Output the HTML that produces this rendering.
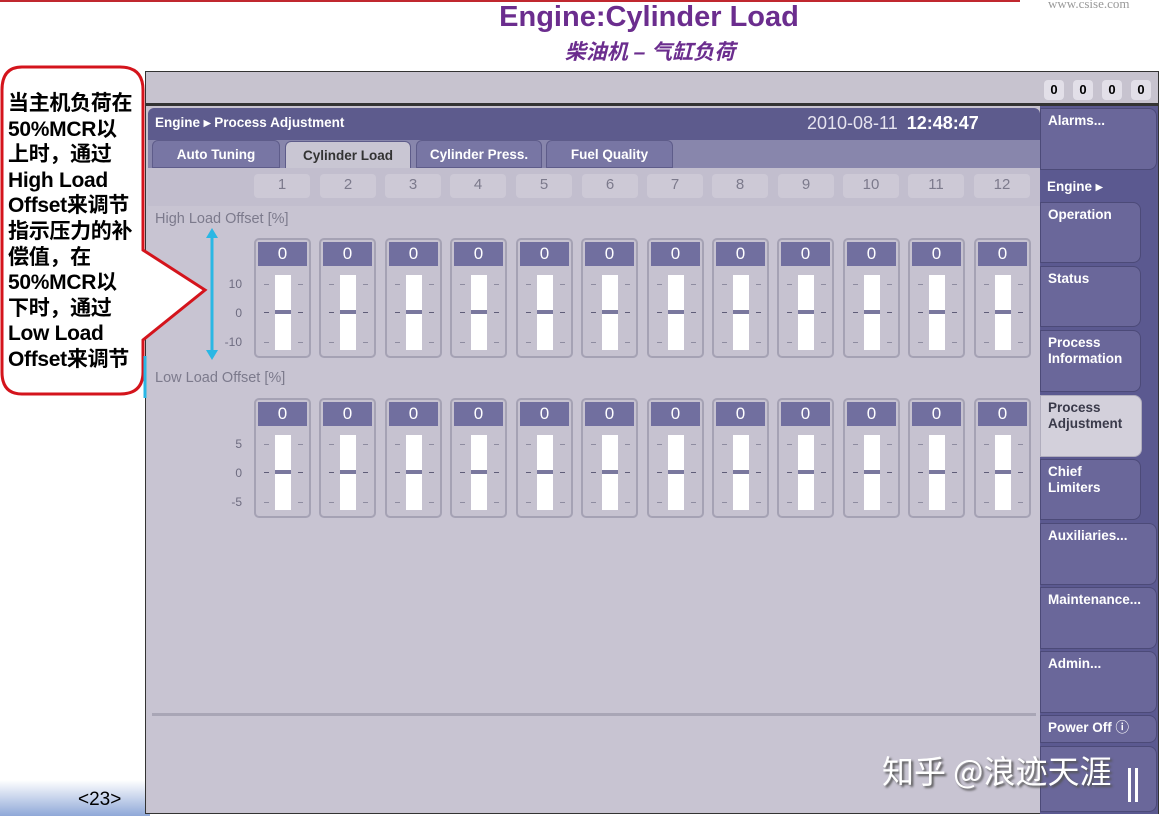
<!DOCTYPE html>
<html><head><meta charset="utf-8"><style>
*{margin:0;padding:0;box-sizing:border-box}
body{width:1166px;height:816px;overflow:hidden;background:#fff;position:relative;font-family:"Liberation Sans","Noto Sans CJK SC",sans-serif}
.a{position:absolute}
.t{font-weight:bold;color:#fff}
.b{position:absolute;width:57px;height:120px;border:2px solid #a5a2b4;border-radius:5px;background-color:#c6c2d0;
background-image:linear-gradient(#8e8ca0,#8e8ca0),linear-gradient(#8e8ca0,#8e8ca0),linear-gradient(#5f5d78,#5f5d78),linear-gradient(#5f5d78,#5f5d78),linear-gradient(#8e8ca0,#8e8ca0),linear-gradient(#8e8ca0,#8e8ca0);
background-size:5px 1px;background-repeat:no-repeat;
background-position:8px 44px,42px 44px,8px 72px,42px 72px,8px 102px,42px 102px}
.b i{position:absolute;left:2px;top:2px;width:49px;height:24px;background:#716f9f;color:#fff;font-style:normal;font-size:17px;text-align:center;line-height:24px}
.b:before{content:"";position:absolute;left:19px;top:35px;width:16px;height:75px;background:#fff}
.b:after{content:"";position:absolute;left:19px;top:70px;width:16px;height:4px;background:#7a789e}
.n{position:absolute;top:174px;width:56px;height:24px;text-align:center;font-size:15px;color:#7c7a8c;background:#cdc9d6;border-radius:4px;line-height:22px}
.sc{position:absolute;font-size:12px;color:#6e6c80;text-align:right;width:30px}
.sb{position:absolute;left:1040px;background:#6a679a;border:1px solid #4c4a78;border-radius:0 8px 8px 0;color:#fff;font-weight:bold;font-size:13.5px;padding:4px 7px;line-height:16px}
.tab{position:absolute;top:140px;height:28px;background:#7876a4;border-radius:6px 6px 0 0;color:#fff;font-weight:bold;font-size:13.5px;text-align:center;line-height:28px;border:1px solid #5e5c8a}
</style></head><body>
<div class="a" style="left:0;top:0;width:1020px;height:2px;background:#c0282f"></div>
<div class="a" style="left:1048px;top:-4px;font-family:'Liberation Serif',serif;font-size:13px;color:#999">www.csise.com</div>
<div class="a" style="left:0;top:0;width:1298px;text-align:center;font-size:29px;font-weight:bold;color:#6b2d8e;line-height:34px">Engine:Cylinder Load</div>
<div class="a" style="left:0;top:36px;width:1300px;text-align:center;font-size:21px;font-weight:bold;font-style:italic;color:#6b2d8e">柴油机 – 气缸负荷</div>
<div class="a" style="left:0;top:780px;width:150px;height:36px;background:linear-gradient(180deg,#fff,#8fa8d8)"></div>
<div class="a" style="left:78px;top:789px;font-size:19px">&lt;23&gt;</div>
<div class="a" style="left:145px;top:71px;width:1014px;height:743px;background:#c7c3cf;border:1px solid #333"></div>
<div class="a" style="left:146px;top:103px;width:1012px;height:3px;background:#333"></div>
<div class="a" style="left:1040px;top:78px;width:118px;height:24px;">
<span class="a" style="left:4px;top:2px;width:20px;height:20px;background:#e2dfe8;border-radius:4px;font-weight:bold;font-size:13px;text-align:center;line-height:20px">0</span>
<span class="a" style="left:33px;top:2px;width:20px;height:20px;background:#e2dfe8;border-radius:4px;font-weight:bold;font-size:13px;text-align:center;line-height:20px">0</span>
<span class="a" style="left:62px;top:2px;width:20px;height:20px;background:#e2dfe8;border-radius:4px;font-weight:bold;font-size:13px;text-align:center;line-height:20px">0</span>
<span class="a" style="left:91px;top:2px;width:20px;height:20px;background:#e2dfe8;border-radius:4px;font-weight:bold;font-size:13px;text-align:center;line-height:20px">0</span></div>
<div class="a" style="left:148px;top:108px;width:892px;height:704px;background:#c8c4d2;border-radius:6px 6px 0 0"></div>
<div class="a" style="left:148px;top:108px;width:892px;height:32px;background:#5d5b8d;border-radius:6px 6px 0 0"></div>
<div class="a t" style="left:155px;top:115px;font-size:13.5px">Engine ▸ Process Adjustment</div>
<div class="a" style="left:807px;top:113px;font-size:18px;color:#e6e4f0">2010-08-11 <b style="color:#fff;margin-left:4px">12:48:47</b></div>
<div class="a" style="left:148px;top:140px;width:892px;height:28px;background:#8886ac"></div>
<div class="tab" style="left:152px;width:128px">Auto Tuning</div>
<div class="tab" style="left:285px;width:126px;background:#c9c6d3;color:#333;top:141px">Cylinder Load</div>
<div class="tab" style="left:416px;width:126px">Cylinder Press.</div>
<div class="tab" style="left:546px;width:127px">Fuel Quality</div>
<div class="a" style="left:148px;top:168px;width:892px;height:38px;background:#c2bece"></div>
<div class="n" style="left:254px">1</div><div class="n" style="left:320px">2</div><div class="n" style="left:385px">3</div><div class="n" style="left:450px">4</div><div class="n" style="left:516px">5</div><div class="n" style="left:582px">6</div><div class="n" style="left:647px">7</div><div class="n" style="left:712px">8</div><div class="n" style="left:778px">9</div><div class="n" style="left:843px">10</div><div class="n" style="left:908px">11</div><div class="n" style="left:974px">12</div>
<div class="a" style="left:155px;top:211px;font-size:14.5px;color:#7c7a8c">High Load Offset [%]</div>
<div class="a" style="left:155px;top:370px;font-size:14.5px;color:#7c7a8c">Low Load Offset [%]</div>
<div class="sc" style="left:212px;top:277px">10</div><div class="sc" style="left:212px;top:306px">0</div><div class="sc" style="left:212px;top:335px">-10</div>
<div class="sc" style="left:212px;top:437px">5</div><div class="sc" style="left:212px;top:466px">0</div><div class="sc" style="left:212px;top:495px">-5</div>
<div class="b" style="left:254px;top:238px"><i>0</i></div><div class="b" style="left:319px;top:238px"><i>0</i></div><div class="b" style="left:385px;top:238px"><i>0</i></div><div class="b" style="left:450px;top:238px"><i>0</i></div><div class="b" style="left:516px;top:238px"><i>0</i></div><div class="b" style="left:581px;top:238px"><i>0</i></div><div class="b" style="left:647px;top:238px"><i>0</i></div><div class="b" style="left:712px;top:238px"><i>0</i></div><div class="b" style="left:777px;top:238px"><i>0</i></div><div class="b" style="left:843px;top:238px"><i>0</i></div><div class="b" style="left:908px;top:238px"><i>0</i></div><div class="b" style="left:974px;top:238px"><i>0</i></div>
<div class="b" style="left:254px;top:398px"><i>0</i></div><div class="b" style="left:319px;top:398px"><i>0</i></div><div class="b" style="left:385px;top:398px"><i>0</i></div><div class="b" style="left:450px;top:398px"><i>0</i></div><div class="b" style="left:516px;top:398px"><i>0</i></div><div class="b" style="left:581px;top:398px"><i>0</i></div><div class="b" style="left:647px;top:398px"><i>0</i></div><div class="b" style="left:712px;top:398px"><i>0</i></div><div class="b" style="left:777px;top:398px"><i>0</i></div><div class="b" style="left:843px;top:398px"><i>0</i></div><div class="b" style="left:908px;top:398px"><i>0</i></div><div class="b" style="left:974px;top:398px"><i>0</i></div>
<div class="a" style="left:152px;top:713px;width:884px;height:3px;background:#a9a6b6"></div>
<div class="a" style="left:1040px;top:106px;width:118px;height:708px;background:#5b5990"></div>
<div class="sb" style="top:108px;width:117px;height:62px">Alarms...</div>
<div class="a t" style="left:1047px;top:179px;font-size:13.5px">Engine ▸</div>
<div class="sb" style="top:202px;width:101px;height:61px">Operation</div>
<div class="sb" style="top:266px;width:101px;height:61px">Status</div>
<div class="sb" style="top:330px;width:101px;height:62px">Process Information</div>
<div class="sb" style="top:395px;width:102px;height:62px;background:#d3d0db;color:#3a3a4a;border-color:#b0adbd">Process Adjustment</div>
<div class="sb" style="top:459px;width:101px;height:61px">Chief Limiters</div>
<div class="sb" style="top:523px;width:117px;height:62px">Auxiliaries...</div>
<div class="sb" style="top:587px;width:117px;height:62px">Maintenance...</div>
<div class="sb" style="top:651px;width:117px;height:62px">Admin...</div>
<div class="sb" style="top:715px;width:117px;height:28px">Power Off ⓘ</div>
<div class="sb" style="top:746px;width:117px;height:66px"></div>
<div class="a" style="left:1128px;top:768px;width:10px;height:34px;border-left:3px solid #fff;border-right:3px solid #fff"></div>
<div class="a" style="left:882px;top:747px;font-size:32px;color:#fff;text-shadow:2px 2px 2px #555;font-family:'Noto Sans CJK SC',sans-serif">知乎 @浪迹天涯</div>
<svg class="a" style="left:0;top:0" width="260" height="420">
<path d="M143,90 Q143,67 120,67 L22,67 Q2,67 2,90 L2,372 Q2,394 22,394 L120,394 Q143,394 143,372 L143,340 L205,290 L143,250 Z" fill="#fff" stroke="#d4141c" stroke-width="3"/>
<line x1="145" y1="356" x2="145" y2="398" stroke="#2ab7e4" stroke-width="3"/>
<line x1="212" y1="236" x2="212" y2="352" stroke="#2ab7e4" stroke-width="3"/>
<path d="M206,238 L212,228 L218,238 Z M206,350 L212,360 L218,350 Z" fill="#2ab7e4"/>
</svg>
<div class="a" style="left:8px;top:91px;width:137px;font-size:21px;font-weight:bold;line-height:25.6px;color:#000;letter-spacing:-0.3px">当主机负荷在<br>50%MCR以<br>上时，通过<br>High Load<br>Offset来调节<br>指示压力的补<br>偿值，在<br>50%MCR以<br>下时，通过<br>Low Load<br>Offset来调节</div>
</body></html>
